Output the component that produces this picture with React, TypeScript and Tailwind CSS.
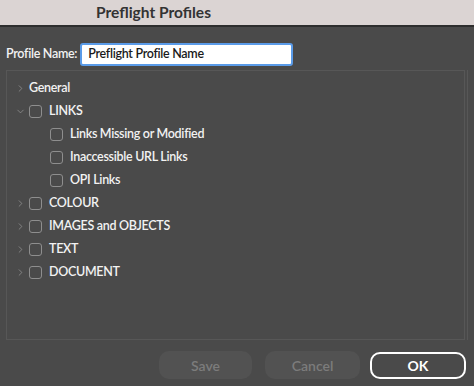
import { ChevronRight, ChevronDown } from "lucide-react"

type Row = {
  label: string
  level: 0 | 1
  expander?: "closed" | "open"
  checkbox?: boolean
}

const rows: Row[] = [
  { label: "General", level: 0, expander: "closed" },
  { label: "LINKS", level: 0, expander: "open", checkbox: true },
  { label: "Links Missing or Modified", level: 1, checkbox: true },
  { label: "Inaccessible URL Links", level: 1, checkbox: true },
  { label: "OPI Links", level: 1, checkbox: true },
  { label: "COLOUR", level: 0, expander: "closed", checkbox: true },
  { label: "IMAGES and OBJECTS", level: 0, expander: "closed", checkbox: true },
  { label: "TEXT", level: 0, expander: "closed", checkbox: true },
  { label: "DOCUMENT", level: 0, expander: "closed", checkbox: true },
]

function Box() {
  return <span className="h-[13px] w-[13px] shrink-0 rounded-[3px] border border-[#8e8e8e] bg-[#4a4a4a]" />
}

export default function App() {
  return (
    <div className="flex h-[386px] w-[474px] flex-col overflow-hidden bg-[#4a4a4a] font-['Lato',sans-serif] text-[12.5px] font-semibold tracking-[-0.3px] text-[#f2f2f2]">
      {/* Title bar */}
      <div className="flex h-[27px] shrink-0 items-center border-b-2 border-[#2e2e2e] bg-[#dbd4d3] pl-[96px] text-[15.5px] font-bold tracking-normal text-[#333]">
        Preflight Profiles
      </div>

      {/* Profile name */}
      <div className="mt-[16px] flex items-center gap-[3px] pl-[6px]">
        <span>Profile Name:</span>
        <div className="flex h-[23px] w-[213px] items-center rounded-[3px] border-2 border-[#5a9be8] bg-white pl-[6px] text-[#1a1a1a]">
          Preflight Profile Name
        </div>
      </div>

      {/* Tree panel */}
      <div className="ml-[6px] mr-[5px] mt-[4px] flex h-[270px] gap-[2px]">
        <div className="flex flex-1 flex-col border border-[#575757] pt-[6px]">
          {rows.map((r) => (
            <div
              key={r.label}
              className={`flex h-[23px] items-center ${r.level === 1 ? "pl-[43px]" : "pl-[8px]"}`}
            >
              {r.level === 0 && (
                <span className="flex w-[14px] shrink-0 items-center text-[#9a9a9a]">
                  {r.expander === "open" ? (
                    <ChevronDown size={11} strokeWidth={1.5} />
                  ) : (
                    <ChevronRight size={11} strokeWidth={1.5} />
                  )}
                </span>
              )}
              {r.checkbox && <Box />}
              <span className={r.checkbox ? "ml-[7px]" : "ml-[0px]"}>{r.label}</span>
            </div>
          ))}
        </div>
        <div className="w-[2px] border-l border-[#575757]" />
      </div>

      {/* Buttons */}
      <div className="mt-[11px] flex items-center pl-[159px] text-[14px] tracking-normal">
        <button className="h-[28px] w-[93px] rounded-[10px] bg-[#525252] text-[#7c7c7c]">Save</button>
        <button className="ml-[13px] h-[28px] w-[95px] rounded-[10px] bg-[#525252] text-[#7c7c7c]">Cancel</button>
        <button className="ml-[10px] h-[27px] w-[96px] rounded-[10px] border-2 border-white font-bold text-white">
          OK
        </button>
      </div>
    </div>
  )
}
